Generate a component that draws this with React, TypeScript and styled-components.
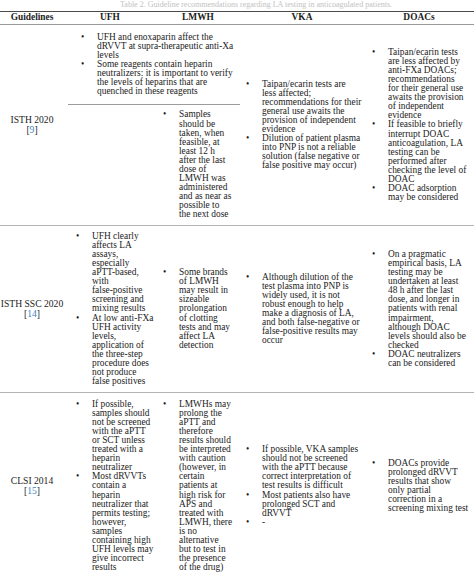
import React from "react";
import styled, { createGlobalStyle } from "styled-components";

const GlobalStyle = createGlobalStyle`
  html, body {
    margin: 0;
    padding: 0;
    background: #ffffff;
  }
  body {
    font-family: "Liberation Serif", "Times New Roman", serif;
    color: #1c1c1c;
  }
`;

type Item = string[];

const COLS = "64px 92px 84px 124px 110px";

const rows = {
  isth2020: {
    ufh: [
      ["UFH and enoxaparin affect the", "dRVVT at supra-therapeutic anti-Xa", "levels"],
      [
        "Some reagents contain heparin",
        "neutralizers: it is important to verify",
        "the levels of heparins that are",
        "quenched in these reagents",
      ],
    ],
    lmwh: [
      [
        "Samples",
        "should be",
        "taken, when",
        "feasible, at",
        "least 12 h",
        "after the last",
        "dose of",
        "LMWH was",
        "administered",
        "and as near as",
        "possible to",
        "the next dose",
      ],
    ],
    vka: [
      [
        "Taipan/ecarin tests are",
        "less affected;",
        "recommendations for their",
        "general use awaits the",
        "provision of independent",
        "evidence",
      ],
      [
        "Dilution of patient plasma",
        "into PNP is not a reliable",
        "solution (false negative or",
        "false positive may occur)",
      ],
    ],
    doacs: [
      [
        "Taipan/ecarin tests",
        "are less affected by",
        "anti-FXa DOACs;",
        "recommendations",
        "for their general use",
        "awaits the provision",
        "of independent",
        "evidence",
      ],
      [
        "If feasible to briefly",
        "interrupt DOAC",
        "anticoagulation, LA",
        "testing can be",
        "performed after",
        "checking the level of",
        "DOAC",
      ],
      ["DOAC adsorption", "may be considered"],
    ],
  },
  isthSsc: {
    ufh: [
      [
        "UFH clearly",
        "affects LA",
        "assays,",
        "especially",
        "aPTT-based,",
        "with",
        "false-positive",
        "screening and",
        "mixing results",
      ],
      [
        "At low anti-FXa",
        "UFH activity",
        "levels,",
        "application of",
        "the three-step",
        "procedure does",
        "not produce",
        "false positives",
      ],
    ],
    lmwh: [
      [
        "Some brands",
        "of LMWH",
        "may result in",
        "sizeable",
        "prolongation",
        "of clotting",
        "tests and may",
        "affect LA",
        "detection",
      ],
    ],
    vka: [
      [
        "Although dilution of the",
        "test plasma into PNP is",
        "widely used, it is not",
        "robust enough to help",
        "make a diagnosis of LA,",
        "and both false-negative or",
        "false-positive results may",
        "occur",
      ],
    ],
    doacs: [
      [
        "On a pragmatic",
        "empirical basis, LA",
        "testing may be",
        "undertaken at least",
        "48 h after the last",
        "dose, and longer in",
        "patients with renal",
        "impairment,",
        "although DOAC",
        "levels should also be",
        "checked",
      ],
      ["DOAC neutralizers", "can be considered"],
    ],
  },
  clsi: {
    ufh: [
      [
        "If possible,",
        "samples should",
        "not be screened",
        "with the aPTT",
        "or SCT unless",
        "treated with a",
        "heparin",
        "neutralizer",
      ],
      [
        "Most dRVVTs",
        "contain a",
        "heparin",
        "neutralizer that",
        "permits testing;",
        "however,",
        "samples",
        "containing high",
        "UFH levels may",
        "give incorrect",
        "results",
      ],
    ],
    lmwh: [
      [
        "LMWHs may",
        "prolong the",
        "aPTT and",
        "therefore",
        "results should",
        "be interpreted",
        "with caution",
        "(however, in",
        "certain",
        "patients at",
        "high risk for",
        "APS and",
        "treated with",
        "LMWH, there",
        "is no",
        "alternative",
        "but to test in",
        "the presence",
        "of the drug)",
      ],
    ],
    vka: [
      [
        "If possible, VKA samples",
        "should not be screened",
        "with the aPTT because",
        "correct interpretation of",
        "test results is difficult",
      ],
      ["Most patients also have", "prolonged SCT and", "dRVVT"],
      ["-"],
    ],
    doacs: [
      [
        "DOACs provide",
        "prolonged dRVVT",
        "results that show",
        "only partial",
        "correction in a",
        "screening mixing test",
      ],
    ],
  },
};

const BulletList = ({ items, indent }: { items: Item[]; indent: number }) => (
  <List $indent={indent}>
    {items.map((lines, i) => (
      <Entry key={i}>
        <Dot>•</Dot>
        <Lines>
          {lines.map((l, j) => (
            <Line key={j}>{l}</Line>
          ))}
        </Lines>
      </Entry>
    ))}
  </List>
);

const Guideline = ({ name, refNo }: { name: string; refNo: string }) => (
  <GuideCell>
    <div>{name}</div>
    <div>
      [<Ref>{refNo}</Ref>]
    </div>
  </GuideCell>
);

export default function App() {
  const r1 = rows.isth2020;
  const r2 = rows.isthSsc;
  const r3 = rows.clsi;
  return (
    <>
      <GlobalStyle />
      <Page>
        <Caption>
          Table 2. Guideline recommendations regarding LA testing in anticoagulated patients.
        </Caption>
        <HeadRow>
          <HeadCell>Guidelines</HeadCell>
          <HeadCell>UFH</HeadCell>
          <HeadCell>LMWH</HeadCell>
          <HeadCell>VKA</HeadCell>
          <HeadCell>DOACs</HeadCell>
        </HeadRow>

        <Row $h={201} $rows="80px 1fr">
          <Guideline name="ISTH 2020" refNo="9" />
          <Cell $col="2 / 4" $row="1" $split>
            <BulletList items={r1.ufh} indent={13} />
          </Cell>
          <Cell $col="3" $row="2">
            <BulletList items={r1.lmwh} indent={7} />
          </Cell>
          <Cell $col="4" $row="1 / 3">
            <BulletList items={r1.vka} indent={6} />
          </Cell>
          <Cell $col="5" $row="1 / 3">
            <BulletList items={r1.doacs} indent={8} />
          </Cell>
        </Row>

        <Row $h={167} $rows="1fr">
          <Guideline name="ISTH SSC 2020" refNo="14" />
          <Cell $col="2" $row="1">
            <BulletList items={r2.ufh} indent={12} />
          </Cell>
          <Cell $col="3" $row="1">
            <BulletList items={r2.lmwh} indent={7} />
          </Cell>
          <Cell $col="4" $row="1">
            <BulletList items={r2.vka} indent={6} />
          </Cell>
          <Cell $col="5" $row="1">
            <BulletList items={r2.doacs} indent={8} />
          </Cell>
        </Row>

        <Row $h={186} $rows="1fr" $last>
          <Guideline name="CLSI 2014" refNo="15" />
          <Cell $col="2" $row="1">
            <BulletList items={r3.ufh} indent={12} />
          </Cell>
          <Cell $col="3" $row="1">
            <BulletList items={r3.lmwh} indent={7} />
          </Cell>
          <Cell $col="4" $row="1">
            <BulletList items={r3.vka} indent={6} />
          </Cell>
          <Cell $col="5" $row="1">
            <BulletList items={r3.doacs} indent={8} />
          </Cell>
        </Row>
      </Page>
    </>
  );
}

const Page = styled.div`
  width: 474px;
  height: 577px;
  overflow: hidden;
  background: #fff;
  font-size: 9.4px;
  line-height: 9.1px;
`;

const Caption = styled.div`
  height: 11px;
  padding-left: 120px;
  color: #c2c2c2;
  font-size: 8px;
  line-height: 9px;
  white-space: nowrap;
`;

const HeadRow = styled.div`
  display: grid;
  grid-template-columns: ${COLS};
  height: 12px;
  border-top: 1.5px solid #4a4a4a;
  border-bottom: 1px solid #9a9a9a;
`;

const HeadCell = styled.div`
  display: flex;
  align-items: center;
  justify-content: center;
  font-weight: bold;
  font-size: 9.4px;
`;

const Row = styled.div<{ $h: number; $rows: string; $last?: boolean }>`
  display: grid;
  grid-template-columns: ${COLS};
  grid-template-rows: ${(p) => p.$rows};
  height: ${(p) => p.$h}px;
  box-sizing: border-box;
  border-bottom: ${(p) => (p.$last ? "none" : "1.5px solid #b3b3b3")};
`;

const Cell = styled.div<{ $col: string; $row: string; $split?: boolean }>`
  grid-column: ${(p) => p.$col};
  grid-row: ${(p) => p.$row};
  display: flex;
  flex-direction: column;
  justify-content: center;
  border-bottom: ${(p) => (p.$split ? "1px solid #9c9c9c" : "none")};
  margin-left: ${(p) => (p.$split ? "4px" : "0")};
`;

const GuideCell = styled.div`
  grid-column: 1;
  grid-row: 1 / -1;
  display: flex;
  flex-direction: column;
  justify-content: center;
  align-items: center;
  text-align: center;
  font-size: 9.6px;
  line-height: 10px;
`;

const Ref = styled.span`
  color: #3f7fc6;
`;

const List = styled.div<{ $indent: number }>`
  display: flex;
  flex-direction: column;
  padding-left: ${(p) => p.$indent}px;
`;

const Entry = styled.div`
  display: flex;
  align-items: flex-start;
`;

const Dot = styled.span`
  flex: 0 0 16px;
`;

const Lines = styled.div`
  display: flex;
  flex-direction: column;
`;

const Line = styled.span`
  display: block;
  white-space: nowrap;
`;
